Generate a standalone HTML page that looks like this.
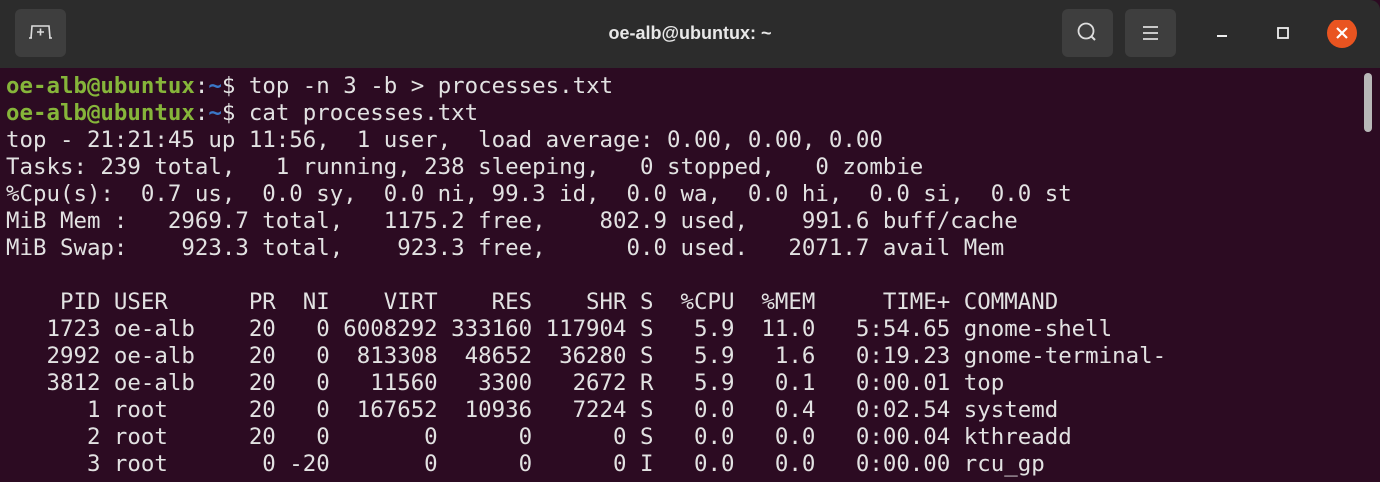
<!DOCTYPE html>
<html><head><meta charset="utf-8"><style>
html,body{margin:0;padding:0;width:1380px;height:482px;overflow:hidden;background:#2c0b22;}
.bar{position:absolute;left:0;top:0;width:1380px;height:68px;background:#2c2c2c;border-top-right-radius:10px;}
.btn{position:absolute;top:9px;width:51px;height:48px;background:#3e3e3e;border-radius:6px;}
.title{position:absolute;left:0;width:1380px;top:23px;text-align:center;color:#e8e8e8;font:bold 18px "Liberation Sans",sans-serif;}
pre{position:absolute;left:6px;top:73px;margin:0;font-family:"DejaVu Sans Mono","Liberation Mono",monospace;font-size:22.42px;line-height:27px;color:#e2e2e2;}
.g{color:#86b53a;font-weight:bold}.b{color:#3a78c9;font-weight:bold}
.sb{position:absolute;left:1364px;top:73px;width:8px;height:59px;background:#b8b8b8;border-radius:4px;}
</style></head><body>
<div class="bar">
<div class="btn" style="left:15px"><svg width="51" height="48"><path d="M16 29 L17 17 L34 17 L35 29" fill="none" stroke="#ddd" stroke-width="1.6"/><path d="M14 29h3M34 29h3M25.5 19.5v7M22 23h7" stroke="#ddd" stroke-width="1.6"/></svg></div>
<div class="title">oe-alb@ubuntux: ~</div>
<div class="btn" style="left:1062px"><svg width="51" height="48"><circle cx="24" cy="22" r="7.5" fill="none" stroke="#ddd" stroke-width="1.8"/><path d="M29.5 27.5 L33 31" stroke="#ddd" stroke-width="2"/></svg></div>
<div class="btn" style="left:1125px"><svg width="51" height="48"><path d="M18 18h15M18 24h15M18 30h15" stroke="#ddd" stroke-width="1.8"/></svg></div>
<svg style="position:absolute;left:1210px;top:20px" width="150" height="30"><path d="M7 16h10" stroke="#eee" stroke-width="2"/><rect x="68" y="8" width="10" height="10" fill="none" stroke="#eee" stroke-width="1.8"/><circle cx="132" cy="13" r="15" fill="#e95420"/><path d="M127 8l10 10M137 8l-10 10" stroke="#fff" stroke-width="2.2"/></svg>
</div>
<div class="sb"></div>
<pre><span class="g">oe-alb@ubuntux</span>:<span class="b">~</span>$ top -n 3 -b &gt; processes.txt
<span class="g">oe-alb@ubuntux</span>:<span class="b">~</span>$ cat processes.txt
top - 21:21:45 up 11:56,  1 user,  load average: 0.00, 0.00, 0.00
Tasks: 239 total,   1 running, 238 sleeping,   0 stopped,   0 zombie
%Cpu(s):  0.7 us,  0.0 sy,  0.0 ni, 99.3 id,  0.0 wa,  0.0 hi,  0.0 si,  0.0 st
MiB Mem :   2969.7 total,   1175.2 free,    802.9 used,    991.6 buff/cache
MiB Swap:    923.3 total,    923.3 free,      0.0 used.   2071.7 avail Mem

    PID USER      PR  NI    VIRT    RES    SHR S  %CPU  %MEM     TIME+ COMMAND
   1723 oe-alb    20   0 6008292 333160 117904 S   5.9  11.0   5:54.65 gnome-shell
   2992 oe-alb    20   0  813308  48652  36280 S   5.9   1.6   0:19.23 gnome-terminal-
   3812 oe-alb    20   0   11560   3300   2672 R   5.9   0.1   0:00.01 top
      1 root      20   0  167652  10936   7224 S   0.0   0.4   0:02.54 systemd
      2 root      20   0       0      0      0 S   0.0   0.0   0:00.04 kthreadd
      3 root       0 -20       0      0      0 I   0.0   0.0   0:00.00 rcu_gp</pre>
</body></html>
